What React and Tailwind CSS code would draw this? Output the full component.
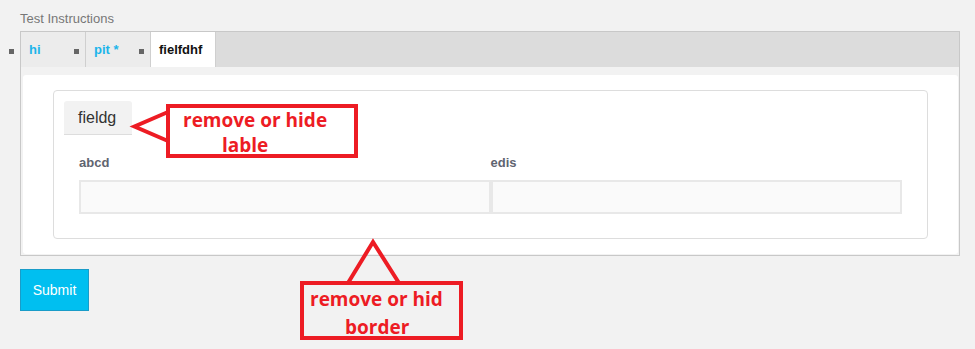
import React from 'react'

const TABS = [
  { label: 'hi', active: false },
  { label: 'pit *', active: false },
  { label: 'fielfdhf', active: true },
]

// Form preview with two red review notes painted over it.
export default function App() {
  return (
    <div className="relative min-h-screen bg-[#f2f2f2] pl-[20px] pt-[12px] font-['Liberation_Sans',Arial,sans-serif]">
      <div className="text-[13px] leading-[14px] text-[#777] mb-[5px]">Test Instructions</div>

      <div className="w-[940px] border border-[#c8c8c8] bg-[#f2f2f2]">
        {/* Tabs */}
        <ul className="flex h-[35px] bg-[#dcdcdc]">
          {TABS.map((tab, idx) => (
            <li
              key={idx}
              className={`relative flex items-center w-[65px] pl-[8px] border-r border-[#cfcfcf] text-[13px] font-bold ${
                tab.active ? 'bg-white text-[#111]' : 'bg-[#ececec] text-[#1cb5ea]'
              }`}
            >
              <span className="absolute -left-[12px] top-[17px] w-[5px] h-[5px] bg-[#666]" />
              {tab.label}
            </li>
          ))}
        </ul>

        {/* Panel */}
        <div className="pt-[8px] pl-[2px] pr-[1px] pb-[1px]">
          <div className="bg-white rounded-[3px] px-[30px] py-[15px]">
            <div className="border border-[#dddddd] rounded-[4px] p-[10px] pb-[24px]">
              <div className="w-[68px] h-[34px] flex items-center pl-[14px] bg-[#f2f2f2] rounded-t-[3px] border-b border-[#dddddd] text-[16px] text-[#333]">
                fieldg
              </div>
              <div className="grid grid-cols-2 mt-[21px] px-[15px]">
                {['abcd', 'edis'].map((name) => (
                  <div key={name} className="flex flex-col">
                    <label className="text-[13px] leading-[14px] font-bold text-[#5f6470] mb-[10px]">{name}</label>
                    <input className="h-[34px] w-full border-2 border-[#e8e8e8] bg-[#fafafa] outline-none" />
                  </div>
                ))}
              </div>
            </div>
          </div>
        </div>
      </div>

      <button className="mt-[13px] w-[69px] h-[42px] bg-[#00bff0] border border-[#1a9cc8] text-white text-[14px]">
        Submit
      </button>

      {/* Review notes */}
      <div className="absolute left-[166px] top-[104px] w-[192px] h-[54px] border-[4px] border-[#ed1c24] font-['Open_Sans',sans-serif] font-bold text-[#ed1c24] text-[19px] leading-[26px]">
        <div className="pl-[13px] -mt-[1px]">remove or hide</div>
        <div className="pl-[52px] -mt-[1px]">lable</div>
      </div>
      <div className="absolute left-[300px] top-[281px] w-[163px] h-[59px] border-[4px] border-[#ed1c24] font-['Open_Sans',sans-serif] font-bold text-[#ed1c24] text-[19px] leading-[29px]">
        <div className="pl-[6px]">remove or hid</div>
        <div className="pl-[41px] -mt-[1px]">border</div>
      </div>
      <svg className="absolute inset-0 pointer-events-none" width="975" height="349">
        <polyline points="168,112 134.5,126.5 168,141" fill="none" stroke="#ed1c24" strokeWidth="4" strokeMiterlimit="10" />
        <polyline points="348,283 373,242 399,283" fill="none" stroke="#ed1c24" strokeWidth="4" strokeMiterlimit="10" />
      </svg>
    </div>
  )
}
